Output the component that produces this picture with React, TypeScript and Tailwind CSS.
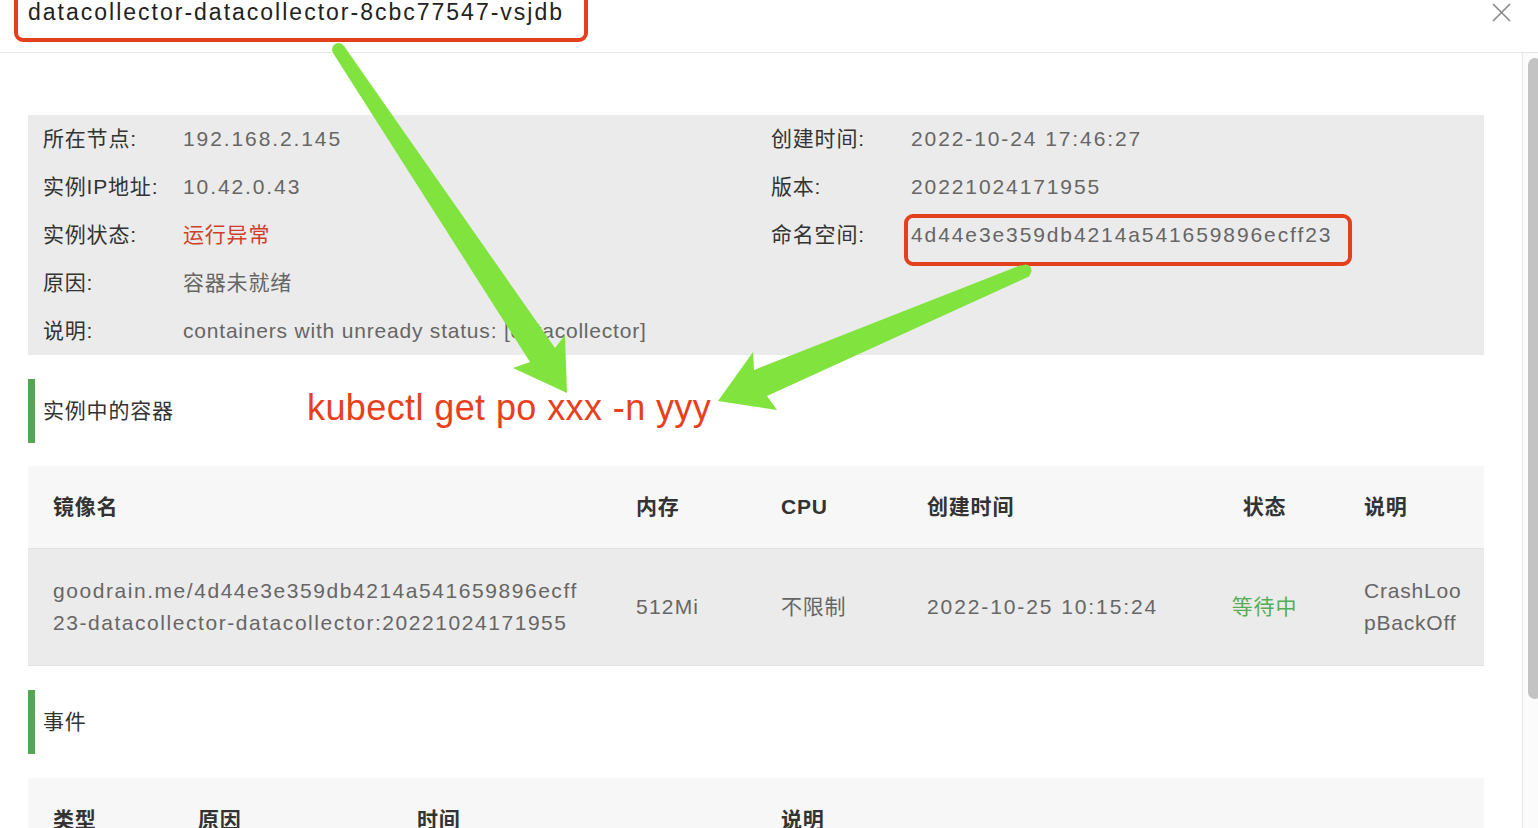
import React from "react"

const info = [
  { label: "所在节点:", value: "192.168.2.145", num: true },
  { label: "实例IP地址:", value: "10.42.0.43", num: true },
  { label: "实例状态:", value: "运行异常", danger: true },
  { label: "原因:", value: "容器未就绪" },
  { label: "说明:", value: "containers with unready status: [datacollector]" },
]

const infoRight = [
  { label: "创建时间:", value: "2022-10-24 17:46:27", num: true },
  { label: "版本:", value: "20221024171955", num: true },
  { label: "命名空间:", value: "4d44e3e359db4214a541659896ecff23", num: true },
]

type Row = { label: string; value: string; danger?: boolean; num?: boolean }

const InfoRow = ({ label, value, danger, num }: Row) => (
  <div className="h-[48px] flex items-center px-[15px] whitespace-nowrap">
    <span className="w-[140px] text-[#333]">{label}</span>
    <span
      className={
        danger
          ? "text-[#d13f2a]"
          : num
            ? "text-[#666] tracking-[1.9px]"
            : "text-[#666]"
      }
    >
      {value}
    </span>
  </div>
)

const SectionTitle = ({ children }: { children: React.ReactNode }) => (
  <div className="flex items-center h-[64px]">
    <div className="w-[7px] h-full bg-[#54a653]" />
    <span className="ml-[8px] text-[#333]">{children}</span>
  </div>
)

const Arrows = () => (
  <svg
    className="absolute left-0 top-0 pointer-events-none"
    width="1538"
    height="828"
    viewBox="0 0 1538 828"
  >
    <g fill="#81e33e">
      <circle cx="338.5" cy="49.5" r="6.5" />
      <polygon points="333,53 344,46 555,348 565,335 567,393 513,368 530,362" />
      <circle cx="1025.5" cy="270.5" r="6" />
      <polygon points="1021,265 1030,276 767,396 777,410 718,401 753,352 754,370" />
    </g>
  </svg>
)

export default function App() {
  return (
    <div className="relative w-[1538px] h-[828px] overflow-hidden bg-white text-[21px] tracking-[0.8px] font-['Liberation_Sans','Noto_Sans_CJK_SC',sans-serif]">
      {/* header */}
      <div className="h-[53px] border-b border-[#e6e6e6] pl-[28px] relative">
        <div className="pt-[1px] text-[23px] leading-[23px] tracking-[2px] text-[#222] whitespace-nowrap">
          datacollector-datacollector-8cbc77547-vsjdb
        </div>
        <svg className="absolute left-[1492px] top-[3px]" width="19" height="19" viewBox="0 0 19 19">
          <path d="M1 1L18 18M18 1L1 18" stroke="#8a8a8a" strokeWidth="1.7" />
        </svg>
      </div>

      <div className="flex h-[775px]">
        <div className="flex-1 pl-[28px] pr-[38px] pt-[62px] overflow-hidden">
          {/* pod info */}
          <div className="grid grid-cols-2 bg-[#ebebeb]">
            <div className="flex flex-col">
              {info.map((r) => (
                <InfoRow key={r.label} {...r} />
              ))}
            </div>
            <div className="flex flex-col">
              {infoRight.map((r) => (
                <InfoRow key={r.label} {...r} />
              ))}
            </div>
          </div>

          <div className="mt-[24px]">
            <SectionTitle>实例中的容器</SectionTitle>
          </div>

          {/* containers */}
          <div className="mt-[23px]">
            <div className="grid grid-cols-[583px_145px_146px_288px_149px_145px] h-[83px] items-center bg-[#f7f7f7] border-b border-[#e4e4e4] font-bold text-[#333] rounded-tl-[2px]">
              <div className="pl-[25px]">镜像名</div>
              <div className="pl-[25px]">内存</div>
              <div className="pl-[25px]">CPU</div>
              <div className="pl-[25px]">创建时间</div>
              <div className="text-center">状态</div>
              <div className="pl-[25px]">说明</div>
            </div>
            <div className="grid grid-cols-[583px_145px_146px_288px_149px_145px] h-[117px] items-center bg-[#ebebeb] border-b border-[#e2e2e2] text-[#666] leading-[32px]">
              <div className="pl-[25px] whitespace-nowrap tracking-[1.55px]">
                <div>goodrain.me/4d44e3e359db4214a541659896ecff</div>
                <div>23-datacollector-datacollector:20221024171955</div>
              </div>
              <div className="pl-[25px] tracking-[1.2px]">512Mi</div>
              <div className="pl-[25px]">不限制</div>
              <div className="pl-[25px] whitespace-nowrap tracking-[1.9px]">2022-10-25 10:15:24</div>
              <div className="text-center text-[#55ad55]">等待中</div>
              <div className="pl-[25px] whitespace-nowrap">
                <div>CrashLoo</div>
                <div>pBackOff</div>
              </div>
            </div>
          </div>

          <div className="mt-[24px]">
            <SectionTitle>事件</SectionTitle>
          </div>

          {/* events */}
          <div className="mt-[24px]">
            <div className="grid grid-cols-[145px_219px_364px_728px] h-[83px] items-center bg-[#f7f7f7] font-bold text-[#333] rounded-tl-[2px]">
              <div className="pl-[25px]">类型</div>
              <div className="pl-[25px]">原因</div>
              <div className="pl-[25px]">时间</div>
              <div className="pl-[25px]">说明</div>
            </div>
          </div>
        </div>

        {/* scrollbar */}
        <div className="w-[16px] border-l border-[#e6e6e6] bg-[#fbfbfb] pt-[5px] pl-[5px] overflow-hidden">
          <div className="w-[14px] h-[641px] rounded-full bg-[#c3c3c3]" />
        </div>
      </div>

      {/* annotations */}
      <div className="absolute left-[14px] top-[-10px] w-[574px] h-[52px] border-[4px] border-[#e5401e] rounded-[9px] pointer-events-none" />
      <div className="absolute left-[904px] top-[214px] w-[448px] h-[52px] border-[4px] border-[#e5401e] rounded-[9px] pointer-events-none" />
      <div className="absolute left-[307px] top-[390px] text-[36px] leading-[36px] tracking-[0.4px] text-[#e8401c] whitespace-nowrap">
        kubectl get po xxx -n yyy
      </div>
      <Arrows />
    </div>
  )
}
